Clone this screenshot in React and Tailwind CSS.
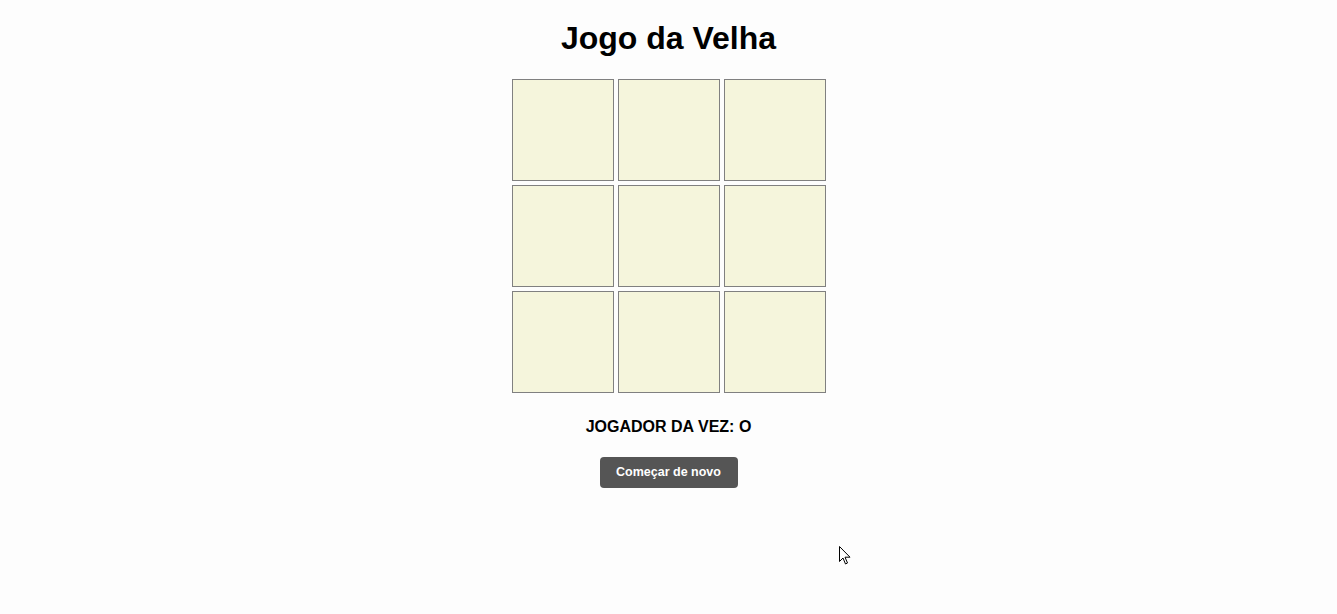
import React, { useState } from "react";

const font = { fontFamily: '"Liberation Sans", Arial, sans-serif' };

export default function App() {
  const [cells, setCells] = useState(Array(9).fill(""));
  const [player, setPlayer] = useState("O");

  const play = (i) => {
    if (cells[i]) return;
    const next = cells.slice();
    next[i] = player;
    setCells(next);
    setPlayer(player === "O" ? "X" : "O");
  };

  const reset = () => {
    setCells(Array(9).fill(""));
    setPlayer("O");
  };

  return (
    <div className="relative min-h-[614px] bg-[#fdfdfd] text-black" style={font}>
      <div className="flex flex-col items-center pt-[20px]">
        <h1 className="text-[32px] font-bold leading-[37px]">Jogo da Velha</h1>
        <div className="mt-[22px] grid grid-cols-[repeat(3,102px)] gap-[4px]">
          {cells.map((c, i) => (
            <button
              key={i}
              onClick={() => play(i)}
              className="flex h-[102px] w-[102px] items-center justify-center border border-[#808080] bg-[#f5f5dc] text-[48px] font-bold"
            >
              {c}
            </button>
          ))}
        </div>
        <p className="mt-[25px] text-[16px] font-bold leading-[18px]">JOGADOR DA VEZ: {player}</p>
        <button
          onClick={reset}
          className="mt-[21px] h-[31px] w-[138px] rounded-[4px] bg-[#555555] text-[12.5px] font-bold text-white"
        >
          Começar de novo
        </button>
      </div>
      <svg
        className="absolute left-[839px] top-[546px]"
        width="12"
        height="19"
        viewBox="0 0 12 19"
      >
        <path
          d="M0.5 0.5 L0.5 15.5 L4 12 L6.5 18 L8.5 17 L6 11.2 L11 11.2 Z"
          fill="#fff"
          stroke="#000"
          strokeWidth="1"
          strokeLinejoin="round"
        />
      </svg>
    </div>
  );
}
